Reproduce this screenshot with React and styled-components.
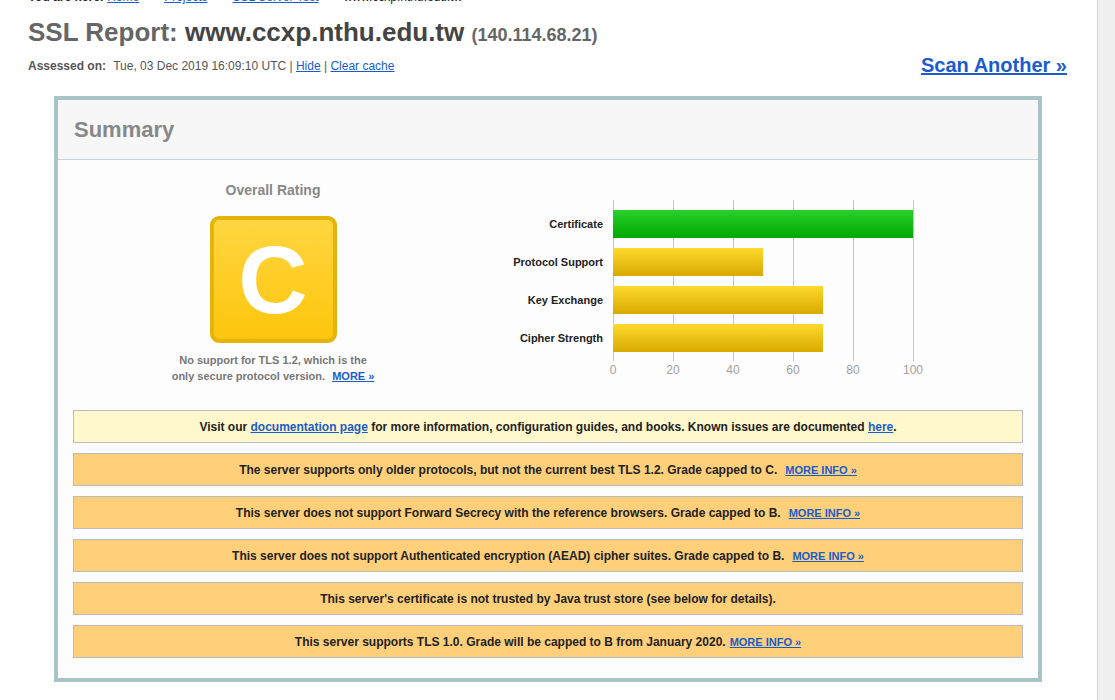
import * as React from "react";
import styled, { createGlobalStyle } from "styled-components";

const GlobalStyle = createGlobalStyle`
    html, body {
        margin: 0;
        padding: 0;
        background: #f0f0f0;
    }
    body {
        font-family: "Liberation Sans", Arial, sans-serif;
        overflow: hidden;
    }
    a {
        color: #1a5ccc;
    }
`

const Layout = styled.div`
    display: flex;
    height: 700px;
`

const Main = styled.div`
    width: 1098px;
    background: #fff;
    border-right: 1px solid #c6d8df;
    padding: 0 31px 0 28px;
    box-sizing: border-box;
    overflow: hidden;
`

const Sidebar = styled.div`
    flex: 1;
    background: #f0f0f0;
`

const Breadcrumb = styled.div`
    margin-top: -10px;
    height: 14px;
    font-size: 12px;
    line-height: 14px;
    color: #222;

    b {
        font-weight: bold;
    }
    span {
        margin: 0 9px;
        color: #666;
    }
`

const Header = styled.div`
    display: flex;
    justify-content: space-between;
    align-items: flex-start;
    padding-top: 13px;
`

const Title = styled.h1`
    margin: 0;
    font-size: 26px;
    line-height: 30px;
    font-weight: bold;
    color: #666;

    strong {
        color: #444;
    }
    small {
        font-size: 18px;
        color: #666;
    }
`

const Assessed = styled.div`
    margin-top: 9px;
    font-size: 12px;
    line-height: 14px;
    color: #555;

    b {
        margin-right: 4px;
    }
`

const ScanAnother = styled.a`
    margin-top: 36px;
    margin-right: -1px;
    font-size: 20px;
    line-height: 24px;
    font-weight: bold;
    color: #1a5ccc;
`

const SummaryBox = styled.div`
    width: 988px;
    margin: 19px 0 0 26px;
    border: 4px solid #a8c4c7;
    box-sizing: border-box;
    background: #fdfdfd;
`

const SummaryHead = styled.div`
    height: 59px;
    display: flex;
    align-items: center;
    padding-left: 16px;
    background: #f7f7f7;
    border-bottom: 1px solid #c9d2d8;
    font-size: 22px;
    font-weight: bold;
    color: #888;
`

const SummaryBody = styled.div`
    padding: 22px 15px 20px;
`

const TopRow = styled.div`
    display: flex;
    margin-bottom: 26px;
`

const RatingCol = styled.div`
    width: 400px;
    display: flex;
    flex-direction: column;
    align-items: center;
`

const RatingTitle = styled.div`
    font-size: 14px;
    line-height: 16px;
    font-weight: bold;
    color: #888;
`

const Grade = styled.div`
    margin-top: 18px;
    width: 127px;
    height: 127px;
    box-sizing: border-box;
    border: 4px solid #e6b30b;
    border-radius: 9px;
    background: linear-gradient(to bottom, #ffd640, #fdc60c);
    display: flex;
    align-items: center;
    justify-content: center;
    color: #fff;
    font-size: 96px;
    font-weight: bold;
    line-height: 1;
`

const RatingNote = styled.div`
    margin-top: 9px;
    font-size: 11px;
    line-height: 16px;
    font-weight: bold;
    color: #777;
    text-align: center;

    a {
        margin-left: 4px;
    }
`

const ChartCol = styled.div`
    margin-top: 18px;
`

const ChartRow = styled.div`
    display: flex;
    gap: 10px;
`

const Labels = styled.div`
    width: 130px;
    padding-top: 10px;
    display: flex;
    flex-direction: column;
    gap: 10px;
`

const Label = styled.div`
    height: 28px;
    display: flex;
    align-items: center;
    justify-content: flex-end;
    font-size: 11px;
    font-weight: bold;
    color: #222;
`

const Track = styled.div`
    width: 301px;
    padding: 10px 0 9px;
    display: flex;
    flex-direction: column;
    gap: 10px;
    background: repeating-linear-gradient(to right, #c4c4c4 0 1px, transparent 1px 60px);
`

const Bar = styled.div`
    height: 28px;
    background: ${p => p.$good
        ? "linear-gradient(to bottom, #2ad12a, #00a800)"
        : "linear-gradient(to bottom, #ffd92e, #d8aa00)"};
`

const Axis = styled.div`
    display: flex;
    margin: 2px 0 0 110px;
`

const Tick = styled.div`
    width: 60px;
    text-align: center;
    font-size: 12px;
    line-height: 14px;
    color: #a0a0a0;
`

const Notices = styled.div`
    display: flex;
    flex-direction: column;
    gap: 10px;
`

const Notice = styled.div`
    height: 33px;
    box-sizing: border-box;
    border: 1px solid #bbb;
    background: ${p => p.$info ? "#fff8cd" : "#ffcf7a"};
    display: flex;
    align-items: center;
    justify-content: center;
    font-size: 12px;
    font-weight: bold;
    color: #222;
`

const MoreInfo = styled.a`
    font-size: 11px;
    font-weight: bold;
    margin-left: ${p => p.$gap}px;
`

const bars = [
    { label: "Certificate", value: 100, good: true },
    { label: "Protocol Support", value: 50 },
    { label: "Key Exchange", value: 70 },
    { label: "Cipher Strength", value: 70 },
];

const warnings = [
    { text: "The server supports only older protocols, but not the current best TLS 1.2. Grade capped to C.", more: 8 },
    { text: "This server does not support Forward Secrecy with the reference browsers. Grade capped to B.", more: 8 },
    { text: "This server does not support Authenticated encryption (AEAD) cipher suites. Grade capped to B.", more: 8 },
    { text: "This server's certificate is not trusted by Java trust store (see below for details)." },
    { text: "This server supports TLS 1.0. Grade will be capped to B from January 2020.", more: 4 },
];

export default function App() {
    return (
        <>
            <GlobalStyle />
            <Layout>
                <Main>
                    <Breadcrumb>
                        <b>You are here:</b> <a href="#">Home</a><span>&gt;</span><a href="#">Projects</a><span>&gt;</span><a href="#">SSL Server Test</a><span>&gt;</span>www.ccxp.nthu.edu.tw
                    </Breadcrumb>
                    <Header>
                        <div>
                            <Title>
                                SSL Report: <strong>www.ccxp.nthu.edu.tw</strong> <small>(140.114.68.21)</small>
                            </Title>
                            <Assessed>
                                <b>Assessed on:</b> Tue, 03 Dec 2019 16:09:10 UTC | <a href="#">Hide</a> | <a href="#">Clear cache</a>
                            </Assessed>
                        </div>
                        <ScanAnother href="#">Scan Another »</ScanAnother>
                    </Header>
                    <SummaryBox>
                        <SummaryHead>Summary</SummaryHead>
                        <SummaryBody>
                            <TopRow>
                                <RatingCol>
                                    <RatingTitle>Overall Rating</RatingTitle>
                                    <Grade>C</Grade>
                                    <RatingNote>
                                        No support for TLS 1.2, which is the<br />
                                        only secure protocol version. <a href="#">MORE »</a>
                                    </RatingNote>
                                </RatingCol>
                                <ChartCol>
                                    <ChartRow>
                                        <Labels>
                                            {bars.map(b => <Label key={b.label}>{b.label}</Label>)}
                                        </Labels>
                                        <Track>
                                            {bars.map(b => (
                                                <Bar key={b.label} $good={b.good} style={{ width: b.value * 3 }} />
                                            ))}
                                        </Track>
                                    </ChartRow>
                                    <Axis>
                                        {[0, 20, 40, 60, 80, 100].map(t => <Tick key={t}>{t}</Tick>)}
                                    </Axis>
                                </ChartCol>
                            </TopRow>
                            <Notices>
                                <Notice $info>
                                    <span>
                                        Visit our <a href="#">documentation page</a> for more information, configuration guides, and books. Known issues are documented <a href="#">here</a>.
                                    </span>
                                </Notice>
                                {warnings.map((w, i) => (
                                    <Notice key={i}>
                                        <span>
                                            {w.text}
                                            {w.more && <MoreInfo href="#" $gap={w.more}>MORE INFO »</MoreInfo>}
                                        </span>
                                    </Notice>
                                ))}
                            </Notices>
                        </SummaryBody>
                    </SummaryBox>
                </Main>
                <Sidebar />
            </Layout>
        </>
    );
}
